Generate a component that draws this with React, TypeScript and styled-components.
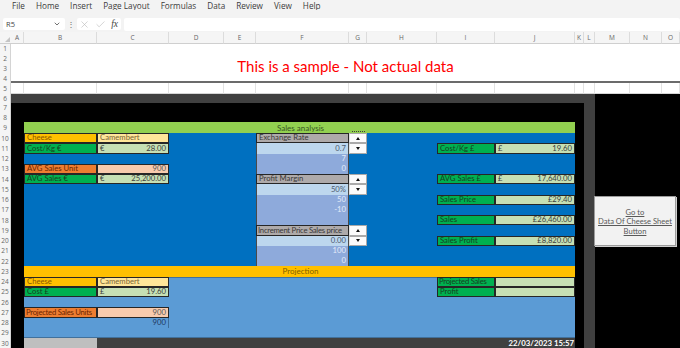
import React from 'react';
import styled, { createGlobalStyle, css } from 'styled-components';
import { ChevronDown, X, Check } from 'lucide-react';

const GlobalStyle = createGlobalStyle`
  html, body {
    margin: 0;
    padding: 0;
    background: #fff;
  }
  body {
    font-family: Lato, "Liberation Sans", sans-serif;
    overflow: hidden;
  }
`;

const COLS = ['A', 'B', 'C', 'D', 'E', 'F', 'G', 'H', 'I', 'J', 'K', 'L', 'M', 'N', 'O'];
const col = (l: string) => COLS.indexOf(l) + 2;
const cols = (a: string, b: string = a) => `${col(a)} / ${col(b) + 1}`;
const rows = (a: number, b: number = a) => `${a + 1} / ${b + 2}`;

const Window = styled.div`
  width: 680px;
  height: 348px;
  overflow: hidden;
  display: flex;
  flex-direction: column;
  background: #fff;
`;

const MenuBar = styled.nav`
  height: 10px;
  display: flex;
  align-items: center;
  gap: 11px;
  padding-left: 12px;
  background: #f3f3f3;
  font-family: "Open Sans", sans-serif;
  font-size: 8.2px;
  color: #3b3b3b;
`;

const FormulaBar = styled.div`
  height: 24px;
  box-sizing: border-box;
  padding: 8px 0 0 3px;
  display: flex;
  align-items: flex-start;
  background: #f3f3f3;
  font-family: "Open Sans", sans-serif;
  font-size: 7.5px;
  color: #444;
`;

const NameBox = styled.div`
  width: 62px;
  height: 12px;
  box-sizing: border-box;
  background: #fff;
  border-radius: 2px;
  display: flex;
  align-items: center;
  justify-content: space-between;
  padding: 0 4px 0 3px;
`;

const Kebab = styled.span`
  width: 12px;
  text-align: center;
  color: #666;
  font-size: 8px;
  line-height: 12px;
`;

const FnGroup = styled.div`
  width: 44px;
  height: 12px;
  box-sizing: border-box;
  padding: 0 3px 0 2px;
  background: #fff;
  border-radius: 2px;
  display: flex;
  align-items: center;
  justify-content: space-between;
  margin-right: 3px;
  color: #b8b8b8;
`;

const Fx = styled.span`
  font-family: "Liberation Serif", serif;
  font-style: italic;
  font-size: 9.5px;
  color: #444;
`;

const FormulaInput = styled.div`
  flex: 1;
  height: 13px;
  background: #fff;
  border-radius: 2px;
`;

const Sheet = styled.div`
  display: grid;
  grid-template-columns: 11px 13px 73px 72px 55px 32px 93px 18px 70px 58px 80px 9px 11px 35px 32px 1fr;
  grid-template-rows: 12px repeat(4, 9.75px) 11px 9px 9.7px 9.6px 10.7px repeat(20, 10.25px) 10px;
  font-size: 7.7px;
`;

type Place = { $gc: string; $gr: string };

const placed = css<Place>`
  grid-column: ${(p) => p.$gc};
  grid-row: ${(p) => p.$gr};
  min-width: 0;
  min-height: 0;
`;

const Corner = styled.div<Place>`
  ${placed};
  background: #f5f5f5;
  border-bottom: 1px solid #cfcfcf;
  position: relative;
  &::after {
    content: '';
    position: absolute;
    right: 1px;
    bottom: 1px;
    border-left: 5px solid transparent;
    border-bottom: 5px solid #c4c4c4;
  }
`;

const ColLetter = styled.div<Place>`
  ${placed};
  background: #f5f5f5;
  border-bottom: 1px solid #cfcfcf;
  border-right: 1px solid #dcdcdc;
  color: #666;
  font-family: "Open Sans", sans-serif;
  font-size: 6.5px;
  display: flex;
  align-items: center;
  justify-content: center;
`;

const RowNum = styled.div<Place>`
  ${placed};
  background: #f5f5f5;
  border-right: 1px solid #d4d4d4;
  color: #666;
  font-family: "Open Sans", sans-serif;
  font-size: 6.5px;
  display: flex;
  align-items: center;
  justify-content: center;
`;

const Banner = styled.div<Place>`
  ${placed};
  background: #fff;
  border-bottom: 2px solid #6b6b6b;
  display: flex;
  align-items: center;
  justify-content: center;
  color: #ff0000;
  font-size: 15px;
  padding-top: 7px;
`;

const GridCell = styled.div<Place>`
  ${placed};
  border-right: 1px solid #e2e2e2;
  border-bottom: 1px solid #d6d6d6;
`;

const Fill = styled.div<Place & { $bg: string }>`
  ${placed};
  background: ${(p) => p.$bg};
`;

const Band = styled.div<Place & { $bg: string; $fg: string }>`
  ${placed};
  background: ${(p) => p.$bg};
  color: ${(p) => p.$fg};
  display: flex;
  align-items: center;
  justify-content: center;
  font-size: 8px;
  padding-left: 2px;
`;

const ProjectionArea = styled.div<Place>`
  ${placed};
  background: #5b9bd5;
  border-top: 1px solid #41719c;
  border-bottom: 1px solid #41719c;
`;

const Stamp = styled.div<Place>`
  ${placed};
  color: #fff;
  font-weight: 700;
  font-size: 7.8px;
  display: flex;
  align-items: center;
  justify-content: flex-end;
  padding-right: 1px;
`;

const tones = {
  cheese: { bg: '#ffc000', fg: '#8a5600' },
  cream: { bg: '#ffe699', fg: '#7a6535' },
  green: { bg: '#00b050', fg: '#173f1f' },
  mint: { bg: '#c6e0b4', fg: '#3d3d3d' },
  orange: { bg: '#ed7d31', fg: '#6b2400' },
  peach: { bg: '#f8cbad', fg: '#595959' },
  gray: { bg: '#aeaaaa', fg: '#3a3838' },
  ice: { bg: '#bdd7ee', fg: '#4d5b70' },
  lilac: { bg: '#8eaadb', fg: '#e4ebf8' },
  plain: { bg: 'transparent', fg: '#1f3864' },
};

type Tone = keyof typeof tones;

const Cell = styled.div<Place & { $tone: Tone; $align?: 'left' | 'right' | 'split'; $frame?: 'box' | 'sides' | 'right'; $tight?: boolean }>`
  ${placed};
  box-sizing: border-box;
  background: ${(p) => tones[p.$tone].bg};
  color: ${(p) => tones[p.$tone].fg};
  display: flex;
  align-items: center;
  justify-content: ${(p) => (p.$align === 'right' ? 'flex-end' : p.$align === 'split' ? 'space-between' : 'flex-start')};
  padding: 0 2px;
  white-space: nowrap;
  overflow: hidden;
  line-height: 1;
  ${(p) => p.$tight && css`letter-spacing: -0.25px; padding: 0 1px;`}
  ${(p) => p.$frame === 'box' && css`border: 1px solid #262626;`}
  ${(p) => p.$frame === 'sides' && css`border-left: 1px solid #4a4a4a; border-right: 1px solid #4a4a4a;`}
  ${(p) => p.$frame === 'right' && css`border-right: 1px solid #3e6d99;`}
`;

const SpinButton = styled.div<Place & { $dir: 'up' | 'down' }>`
  ${placed};
  box-sizing: border-box;
  background: #fbfbfb;
  border: 1px solid #a9a9a9;
  border-left-color: #e0e0e0;
  display: flex;
  align-items: center;
  justify-content: center;
  &::after {
    content: '';
    border-left: 2.5px solid transparent;
    border-right: 2.5px solid transparent;
    ${(p) => (p.$dir === 'up' ? css`border-bottom: 3px solid #111;` : css`border-top: 3px solid #111;`)}
  }
`;

const Handle = styled.div<Place>`
  ${placed};
  align-self: end;
  margin: 0 2px 1px 3px;
  border-bottom: 1px dotted #3a3a3a;
`;

const MacroButton = styled.div<Place>`
  ${placed};
  margin: 1px 4px 0 -1px;
  background: #f2f2f2;
  border: 1px solid #9c9c9c;
  box-shadow: 1px 1px 0 #cfcfcf;
  display: flex;
  flex-direction: column;
  align-items: center;
  justify-content: center;
  color: #595959;
  font-size: 7.6px;
  line-height: 9.6px;
  text-decoration: underline;
  padding-top: 3px;
`;

const menu = ['File', 'Home', 'Insert', 'Page Layout', 'Formulas', 'Data', 'Review', 'View', 'Help'];

const rowNumbers = Array.from({ length: 30 }, (_, i) => i + 1);

type Entry = {
  c: string;
  r: number;
  t: Tone;
  v: React.ReactNode;
  a?: 'left' | 'right' | 'split';
  f?: 'box' | 'sides' | 'right';
  tight?: boolean;
};

const money = (sym: string, n: string) => (
  <>
    <span>{sym}</span>
    <span>{n}</span>
  </>
);

const entries: Entry[] = [
  { c: 'B', r: 10, t: 'cheese', v: 'Cheese', f: 'box' },
  { c: 'C', r: 10, t: 'cream', v: 'Camembert', f: 'box' },
  { c: 'B', r: 11, t: 'green', v: 'Cost/Kg €', f: 'box' },
  { c: 'C', r: 11, t: 'mint', v: money('€', '28.00'), a: 'split', f: 'box' },
  { c: 'B', r: 13, t: 'orange', v: 'AVG Sales Unit', f: 'box' },
  { c: 'C', r: 13, t: 'peach', v: '900', a: 'right', f: 'box' },
  { c: 'B', r: 14, t: 'green', v: 'AVG Sales €', f: 'box' },
  { c: 'C', r: 14, t: 'mint', v: money('€', '25,200.00'), a: 'split', f: 'box' },

  { c: 'F', r: 10, t: 'gray', v: 'Exchange Rate', f: 'box' },
  { c: 'F', r: 11, t: 'ice', v: '0.7', a: 'right', f: 'sides' },
  { c: 'F', r: 12, t: 'lilac', v: '7', a: 'right', f: 'sides' },
  { c: 'F', r: 13, t: 'lilac', v: '0', a: 'right', f: 'sides' },
  { c: 'F', r: 14, t: 'gray', v: 'Profit Margin', f: 'box' },
  { c: 'F', r: 15, t: 'ice', v: '50%', a: 'right', f: 'sides' },
  { c: 'F', r: 16, t: 'lilac', v: '50', a: 'right', f: 'sides' },
  { c: 'F', r: 17, t: 'lilac', v: '-10', a: 'right', f: 'sides' },
  { c: 'F', r: 18, t: 'lilac', v: '', a: 'right', f: 'sides' },
  { c: 'F', r: 19, t: 'gray', v: 'Increment Price Sales price', f: 'box', tight: true },
  { c: 'F', r: 20, t: 'ice', v: '0.00', a: 'right', f: 'sides' },
  { c: 'F', r: 21, t: 'lilac', v: '100', a: 'right', f: 'sides' },
  { c: 'F', r: 22, t: 'lilac', v: '0', a: 'right', f: 'sides' },

  { c: 'I', r: 11, t: 'green', v: 'Cost/Kg £', f: 'box' },
  { c: 'J', r: 11, t: 'mint', v: money('£', '19.60'), a: 'split', f: 'box' },
  { c: 'I', r: 14, t: 'green', v: 'AVG Sales £', f: 'box' },
  { c: 'J', r: 14, t: 'mint', v: money('£', '17,640.00'), a: 'split', f: 'box' },
  { c: 'I', r: 16, t: 'green', v: 'Sales Price', f: 'box' },
  { c: 'J', r: 16, t: 'mint', v: '£29.40', a: 'right', f: 'box' },
  { c: 'I', r: 18, t: 'green', v: 'Sales', f: 'box' },
  { c: 'J', r: 18, t: 'mint', v: '£26,460.00', a: 'right', f: 'box' },
  { c: 'I', r: 20, t: 'green', v: 'Sales Profit', f: 'box' },
  { c: 'J', r: 20, t: 'mint', v: '£8,820.00', a: 'right', f: 'box' },

  { c: 'B', r: 24, t: 'cheese', v: 'Cheese', f: 'box' },
  { c: 'C', r: 24, t: 'cream', v: 'Camembert', f: 'box' },
  { c: 'B', r: 25, t: 'green', v: 'Cost £', f: 'box' },
  { c: 'C', r: 25, t: 'mint', v: money('£', '19.60'), a: 'split', f: 'box' },
  { c: 'I', r: 24, t: 'green', v: 'Projected Sales', f: 'box', tight: true },
  { c: 'J', r: 24, t: 'mint', v: '', f: 'box' },
  { c: 'I', r: 25, t: 'green', v: 'Profit', f: 'box' },
  { c: 'J', r: 25, t: 'mint', v: '', f: 'box' },
  { c: 'B', r: 27, t: 'orange', v: 'Projected Sales Units', f: 'box', tight: true },
  { c: 'C', r: 27, t: 'peach', v: '900', a: 'right', f: 'box' },
  { c: 'C', r: 28, t: 'plain', v: '900', a: 'right', f: 'right' },
];

const spinRows = [10, 14, 19];

const App = () => (
  <Window>
    <GlobalStyle />
    <MenuBar>
      {menu.map((m) => (
        <span key={m}>{m}</span>
      ))}
    </MenuBar>
    <FormulaBar>
      <NameBox>
        <span>R5</span>
        <ChevronDown size={8} strokeWidth={2.5} color="#555" />
      </NameBox>
      <Kebab>⋮</Kebab>
      <FnGroup>
        <X size={11} strokeWidth={1.3} />
        <Check size={11} strokeWidth={1.3} />
        <Fx>fx</Fx>
      </FnGroup>
      <FormulaInput />
    </FormulaBar>

    <Sheet>
      <Corner $gc="1 / 2" $gr="1 / 2" />
      {COLS.map((l) => (
        <ColLetter key={l} $gc={cols(l)} $gr="1 / 2">
          {l}
        </ColLetter>
      ))}
      {rowNumbers.map((n) => (
        <RowNum key={n} $gc="1 / 2" $gr={rows(n)}>
          {n}
        </RowNum>
      ))}

      <Banner $gc="2 / -1" $gr={rows(1, 4)}>This is a sample - Not actual data</Banner>
      {COLS.map((l) => (
        <GridCell key={l} $gc={cols(l)} $gr={rows(5)} />
      ))}

      <Fill $gc={cols('A', 'L')} $gr={rows(6)} $bg="#404040" />
      <Fill $gc={cols('M', 'O')} $gr={rows(6, 30)} $bg="#000" />
      <Fill $gc={cols('A')} $gr={rows(7, 30)} $bg="#000" />
      <Fill $gc={cols('K')} $gr={rows(7, 30)} $bg="#000" />
      <Fill $gc={cols('L')} $gr={rows(7, 30)} $bg="#404040" />
      <Fill $gc={cols('B', 'J')} $gr={rows(7, 8)} $bg="#000" />

      <Band $gc={cols('B', 'J')} $gr={rows(9)} $bg="#92d050" $fg="#375623">
        Sales analysis
      </Band>
      <Fill $gc={cols('B', 'J')} $gr={rows(10, 22)} $bg="#0070c0" />
      <Band $gc={cols('B', 'J')} $gr={rows(23)} $bg="#ffc000" $fg="#7f6000">
        Projection
      </Band>
      <ProjectionArea $gc={cols('B', 'J')} $gr={rows(24, 29)} />
      <Fill $gc={cols('B')} $gr={rows(30)} $bg="#bfbfbf" />
      <Fill $gc={cols('C', 'J')} $gr={rows(30)} $bg="#404040" />
      <Stamp $gc={cols('J')} $gr={rows(30)}>22/03/2023 15:57</Stamp>

      {entries.map((e) => (
        <Cell
          key={`${e.c}${e.r}`}
          $gc={cols(e.c)}
          $gr={rows(e.r)}
          $tone={e.t}
          $align={e.a}
          $frame={e.f}
          $tight={e.tight}
        >
          {e.v}
        </Cell>
      ))}

      <Handle $gc={cols('G')} $gr={rows(9)} />
      {spinRows.map((r) => (
        <React.Fragment key={r}>
          <SpinButton $gc={cols('G')} $gr={rows(r)} $dir="up" />
          <SpinButton $gc={cols('G')} $gr={rows(r + 1)} $dir="down" />
        </React.Fragment>
      ))}

      <MacroButton $gc={cols('M', 'O')} $gr={rows(16, 20)}>
        <span>Go to</span>
        <span>Data Of Cheese Sheet</span>
        <span>Button</span>
      </MacroButton>
    </Sheet>
  </Window>
);

export default App;
